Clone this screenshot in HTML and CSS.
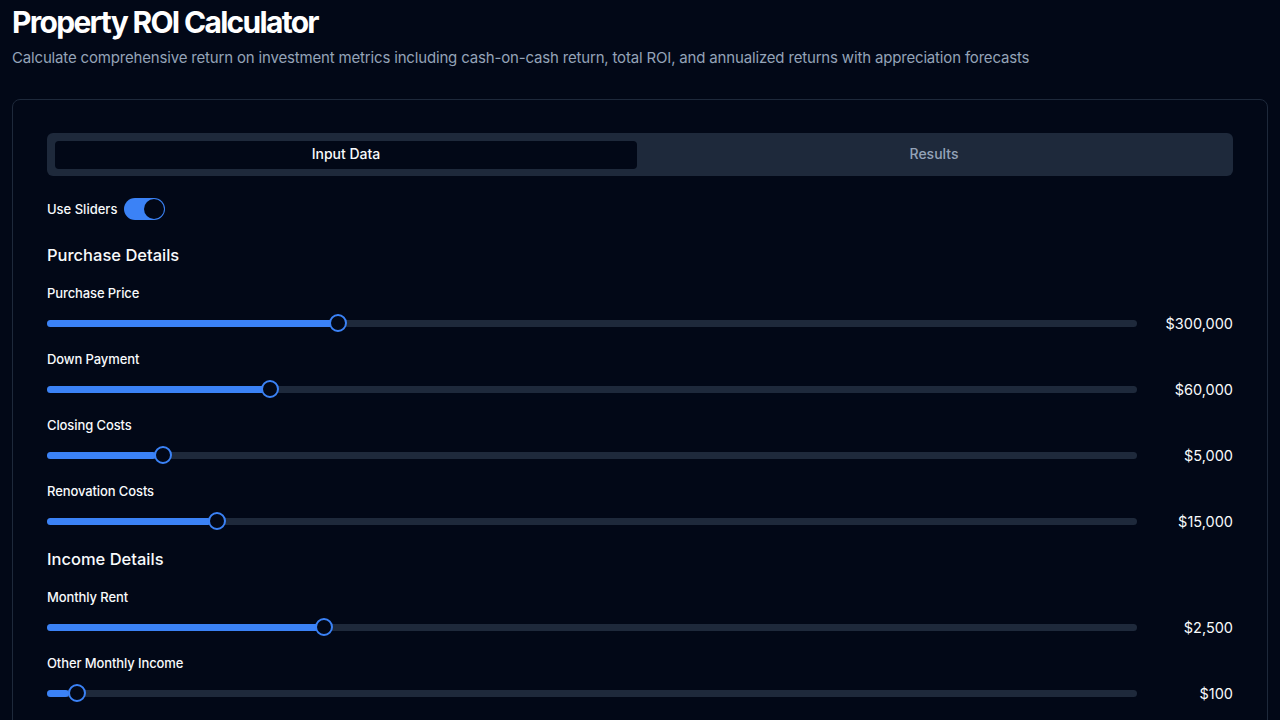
FILE: index.html
```html
<!DOCTYPE html>
<html lang="en">
<head>
  <meta charset="UTF-8" />
  <title>Property ROI Calculator</title>
  <link rel="stylesheet" href="styles.css">
</head>
<body>
  <div class="page">
    <h1 class="title">Property ROI Calculator</h1>
    <p class="subtitle">Calculate comprehensive return on investment metrics including cash-on-cash return, total ROI, and annualized returns with appreciation forecasts</p>

    <div class="card">
      <div class="tabs">
        <button class="tab active">Input Data</button>
        <button class="tab">Results</button>
      </div>

      <div class="switch-row">
        <span class="switch-label">Use Sliders</span>
        <span class="switch on"><span class="switch-thumb"></span></span>
      </div>

      <h2 class="section-title">Purchase Details</h2>

      <div class="field">
        <div class="field-label">Purchase Price</div>
        <div class="slider-row">
          <div class="track">
            <div class="range" style="width: 26.32%"></div>
            <div class="thumb" style="left: calc(9px + (100% - 18px) * 0.2632)"></div>
          </div>
          <div class="value">$300,000</div>
        </div>
      </div>

      <div class="field">
        <div class="field-label">Down Payment</div>
        <div class="slider-row">
          <div class="track">
            <div class="range" style="width: 20%"></div>
            <div class="thumb" style="left: calc(9px + (100% - 18px) * 0.2)"></div>
          </div>
          <div class="value">$60,000</div>
        </div>
      </div>

      <div class="field">
        <div class="field-label">Closing Costs</div>
        <div class="slider-row">
          <div class="track">
            <div class="range" style="width: 10%"></div>
            <div class="thumb" style="left: calc(9px + (100% - 18px) * 0.1)"></div>
          </div>
          <div class="value">$5,000</div>
        </div>
      </div>

      <div class="field">
        <div class="field-label">Renovation Costs</div>
        <div class="slider-row">
          <div class="track">
            <div class="range" style="width: 15%"></div>
            <div class="thumb" style="left: calc(9px + (100% - 18px) * 0.15)"></div>
          </div>
          <div class="value">$15,000</div>
        </div>
      </div>

      <h2 class="section-title">Income Details</h2>

      <div class="field">
        <div class="field-label">Monthly Rent</div>
        <div class="slider-row">
          <div class="track">
            <div class="range" style="width: 25%"></div>
            <div class="thumb" style="left: calc(9px + (100% - 18px) * 0.25)"></div>
          </div>
          <div class="value">$2,500</div>
        </div>
      </div>

      <div class="field">
        <div class="field-label">Other Monthly Income</div>
        <div class="slider-row">
          <div class="track">
            <div class="range" style="width: 2%"></div>
            <div class="thumb" style="left: calc(9px + (100% - 18px) * 0.02)"></div>
          </div>
          <div class="value">$100</div>
        </div>
      </div>
    </div>
  </div>
</body>
</html>
```

FILE: styles.css
```css
* {
  box-sizing: border-box;
}

body {
  margin: 0;
  background-color: #020817;
  color: #f8fafc;
  font-family: Inter, "Noto Sans", sans-serif;
}

.page {
  padding: 4px 12px 24px;
}

.title {
  margin: 0;
  font-size: 30px;
  line-height: 36px;
  font-weight: 700;
  letter-spacing: -1.7px;
  color: #ffffff;
}

.subtitle {
  margin: 6px 0 29px;
  font-size: 15px;
  line-height: 24px;
  letter-spacing: -0.17px;
  color: #94a3b8;
}

.card {
  border: 1px solid #1e293b;
  border-radius: 8px;
  padding: 33px 34px;
  background-color: #020817;
}

.tabs {
  display: grid;
  grid-template-columns: 1fr 1fr;
  gap: 6px;
  height: 43px;
  padding: 8px 8px 7px;
  border-radius: 6px;
  background-color: #1e293b;
}

.tab {
  border: 0;
  border-radius: 4px;
  padding: 0 0 3px;
  background: transparent;
  color: #94a3b8;
  font-family: inherit;
  font-size: 14px;
  font-weight: 500;
  cursor: pointer;
}

.tab.active {
  background-color: #020817;
  color: #f8fafc;
}

.switch-row {
  display: flex;
  align-items: center;
  gap: 7px;
  margin-top: 21px;
  height: 24px;
}

.switch-label {
  font-size: 13px;
  font-weight: 500;
}

.switch {
  position: relative;
  width: 41px;
  height: 22px;
  border-radius: 11px;
  background-color: #3b82f6;
}

.switch-thumb {
  position: absolute;
  top: 1px;
  right: 1px;
  width: 20px;
  height: 20px;
  border-radius: 50%;
  background-color: #020817;
}

.section-title {
  margin: 20px 0 14px;
  font-size: 16.5px;
  line-height: 28px;
  font-weight: 500;
}

.field + .section-title {
  margin-top: 14px;
}

.field + .field {
  margin-top: 16px;
}

.field-label {
  font-size: 13px;
  line-height: 20px;
  font-weight: 500;
  letter-spacing: -0.1px;
  margin-bottom: 10px;
}

.slider-row {
  display: flex;
  align-items: center;
  gap: 16px;
  height: 20px;
}

.track {
  position: relative;
  flex: 1;
  height: 7px;
  border-radius: 4px;
  background-color: #1e293b;
}

.range {
  height: 100%;
  border-radius: 4px;
  background-color: #3b82f6;
}

.thumb {
  position: absolute;
  top: 50%;
  width: 18px;
  height: 18px;
  margin: -9px 0 0 -9px;
  border: 2px solid #3b82f6;
  border-radius: 50%;
  background-color: #020817;
}

.value {
  width: 80px;
  text-align: right;
  font-size: 14.5px;
}
```
